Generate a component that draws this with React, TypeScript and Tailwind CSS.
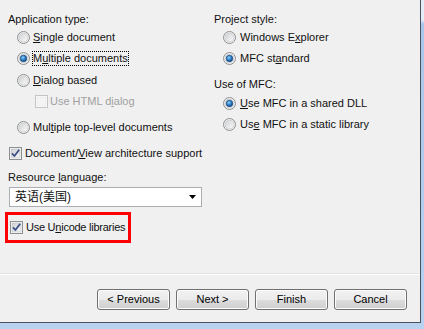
import type { ReactNode } from 'react'

// Win7-style radio glyph
function Radio({ checked }: { checked?: boolean }) {
  return (
    <svg width="13" height="13" viewBox="0 0 13 13" className="shrink-0">
      <defs>
        <linearGradient id="rfill" x1="0" y1="0" x2="1" y2="1">
          <stop offset="0" stopColor="#cfd1d4" />
          <stop offset="1" stopColor="#fbfbfb" />
        </linearGradient>
        <radialGradient id="rdot" cx="0.4" cy="0.35" r="0.7">
          <stop offset="0" stopColor="#8fd3fb" />
          <stop offset="0.55" stopColor="#2a7cc8" />
          <stop offset="1" stopColor="#0f3f78" />
        </radialGradient>
      </defs>
      <circle cx="6.5" cy="6.5" r="6" fill="#f4f4f4" stroke="#8e8f8f" />
      <circle cx="6.5" cy="6.5" r="4.5" fill="url(#rfill)" stroke="#c8c9cb" strokeWidth="0.8" />
      {checked && <circle cx="6.5" cy="6.5" r="3.2" fill="url(#rdot)" stroke="#1c4a7e" strokeWidth="0.8" />}
    </svg>
  )
}

function Check({ checked, disabled }: { checked?: boolean; disabled?: boolean }) {
  return (
    <svg width="13" height="13" viewBox="0 0 13 13" className="shrink-0">
      <defs>
        <linearGradient id="cfill" x1="0" y1="0" x2="1" y2="1">
          <stop offset="0" stopColor="#cdd0d5" />
          <stop offset="1" stopColor="#f7f7f7" />
        </linearGradient>
      </defs>
      <rect x="0.5" y="0.5" width="12" height="12" fill="#fff" stroke={disabled ? '#c4c4c4' : '#8e8f8f'} />
      <rect x="2" y="2" width="9" height="9" fill={disabled ? '#f4f4f4' : 'url(#cfill)'} stroke={disabled ? '#e4e4e4' : '#b9bcc2'} strokeWidth="0.6" />
      {checked && (
        <path d="M3 6.3 L5.4 9 L10.2 2.8" fill="none" stroke="#3c4f86" strokeWidth="1.8" strokeLinejoin="round" />
      )}
    </svg>
  )
}

function Row({ children, h, className = '' }: { children: ReactNode; h: string; className?: string }) {
  return <div className={`flex items-center whitespace-nowrap ${h} ${className}`}>{children}</div>
}

function Button({ label }: { label: string }) {
  return (
    <div className="w-[73px] h-[21px] rounded-[3px] border border-[#707070] bg-[linear-gradient(#f2f2f2_0%,#ebebeb_50%,#dddddd_51%,#cfcfcf_100%)] shadow-[inset_0_0_0_1px_#fcfcfc] flex items-center justify-center text-black">
      {label}
    </div>
  )
}

export default function App() {
  return (
    <div className="w-[424px] h-[329px] bg-[linear-gradient(#e4edf8_0px,#e4edf8_20px,#a9c7ea_24px,#b8d2f0_100%)] font-['Liberation_Sans','Noto_Sans_CJK_SC',sans-serif] text-[11px] leading-[13px] text-[#111]">
      <div className="w-[421px] h-[323px] bg-[#f0f0f0] border-r border-b border-[#48515c] flex flex-col">
        <div className="flex pt-[11px] pl-[8px] h-[273px]">
          {/* Left column */}
          <div className="w-[206px] flex flex-col">
            <Row h="h-[16px]">Application type:</Row>
            <Row h="h-[20px]" className="pl-[9px] gap-[3px]">
              <Radio />
              <span><u>S</u>ingle document</span>
            </Row>
            <Row h="h-[22px]" className="pl-[9px] gap-[3px]">
              <Radio checked />
              <span className="outline outline-1 outline-dotted outline-black">M<u>u</u>ltiple documents</span>
            </Row>
            <Row h="h-[22px]" className="pl-[9px] gap-[3px]">
              <Radio />
              <span><u>D</u>ialog based</span>
            </Row>
            <Row h="h-[20px]" className="pl-[27px] gap-[2px]">
              <Check disabled />
              <span className="text-[#a0a0a0]">Use HTML d<u>i</u>alog</span>
            </Row>
            <Row h="h-[32px]" className="pl-[9px] gap-[3px]">
              <Radio />
              <span>Mul<u>t</u>iple top-level documents</span>
            </Row>
            <Row h="h-[20px]" className="pl-[1px] gap-[3px]">
              <Check checked />
              <span>Document/<u>V</u>iew architecture support</span>
            </Row>
            <Row h="h-[20px]" className="mt-[4px]">
              <span>Resource <u>l</u>anguage:</span>
            </Row>
            <div className="ml-[1px] w-[193px] h-[20px] bg-white border border-[#abadb3] flex items-center justify-between pl-[5px] pr-[5px]">
              <span className="text-[12px]">英语(美国)</span>
              <svg width="7" height="4" viewBox="0 0 7 4">
                <path d="M0 0 H7 L3.5 4 Z" fill="#000" />
              </svg>
            </div>
            <div className="mt-[5px] -ml-[3px] w-[126px] h-[31px] border-[3px] border-[#ff0000] flex items-center pl-[2px] gap-[3px] whitespace-nowrap">
              <Check checked />
              <span className="shrink-0 tracking-[-0.25px]">Use U<u>n</u>icode libraries</span>
            </div>
          </div>

          {/* Right column */}
          <div className="flex flex-col">
            <Row h="h-[16px]">Project style:</Row>
            <Row h="h-[20px]" className="pl-[9px] gap-[4px]">
              <Radio />
              <span>Windows E<u>x</u>plorer</span>
            </Row>
            <Row h="h-[22px]" className="pl-[9px] gap-[4px]">
              <Radio checked />
              <span>MFC st<u>a</u>ndard</span>
            </Row>
            <Row h="h-[16px]" className="mt-[7px]">Use of MFC:</Row>
            <Row h="h-[20px]" className="mt-[1px] pl-[9px] gap-[4px]">
              <Radio checked />
              <span><u>U</u>se MFC in a shared DLL</span>
            </Row>
            <Row h="h-[22px]" className="pl-[9px] gap-[4px]">
              <Radio />
              <span>Us<u>e</u> MFC in a static library</span>
            </Row>
          </div>
        </div>

        <div className="h-[2px] border-t border-[#e2e2e2] border-b border-b-white" />

        <div className="mt-[14px] flex justify-end gap-[6px] pr-[13px]">
          <Button label="< Previous" />
          <Button label="Next >" />
          <Button label="Finish" />
          <Button label="Cancel" />
        </div>
      </div>
    </div>
  )
}
